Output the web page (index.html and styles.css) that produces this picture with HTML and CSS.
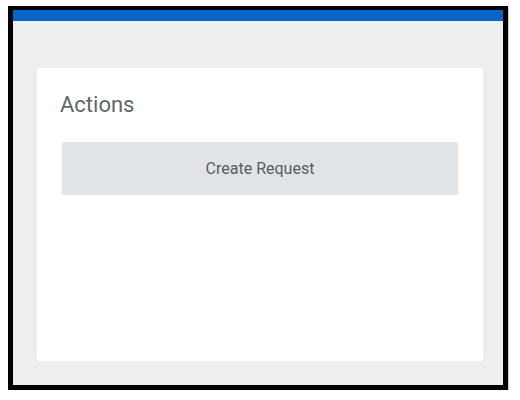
FILE: index.html
```html
<!DOCTYPE html>
<html lang="en">
<head>
    <meta charset="UTF-8">
    <meta name="viewport" content="width=device-width, initial-scale=1.0">
    <title>Actions</title>
    <link rel="stylesheet" href="styles.css">
</head>
<body>

<div class="frame">
    <!-- Top bar -->
    <div class="topbar"></div>

    <div class="content">
        <div class="card">
            <h2>Actions</h2>
            <button class="action-btn">Create Request</button>
        </div>
    </div>
</div>

</body>
</html>
```

FILE: styles.css
```css
body {
    font-family: Roboto, "Liberation Sans", Arial, sans-serif;
    margin: 0;
    padding: 0;
    background-color: #fff;
}

.frame {
    width: 490px;
    height: 375px;
    margin: 6px 0 0 8px;
    border: 5px solid #000;
    border-top-width: 4px;
    display: flex;
    flex-direction: column;
    background-color: #edeef0;
    box-shadow: 1px 1px 0 #c8c8c8;
}

.topbar {
    height: 11px;
    background-color: #0566c8;
}

.content {
    flex: 1;
    display: flex;
    padding: 47px 20px 24px 24px;
}

.card {
    flex: 1;
    background-color: #fff;
    border-radius: 3px;
    padding: 24px 25px;
}

.card h2 {
    margin: 0 0 24px -2px;
    font-size: 22px;
    font-weight: 400;
    line-height: 26px;
    color: #62666b;
}

.action-btn {
    display: block;
    width: 100%;
    height: 53px;
    border: none;
    border-radius: 3px;
    background-color: #e0e4e7;
    color: #585c61;
    font-family: inherit;
    font-size: 16px;
    cursor: pointer;
}
```
